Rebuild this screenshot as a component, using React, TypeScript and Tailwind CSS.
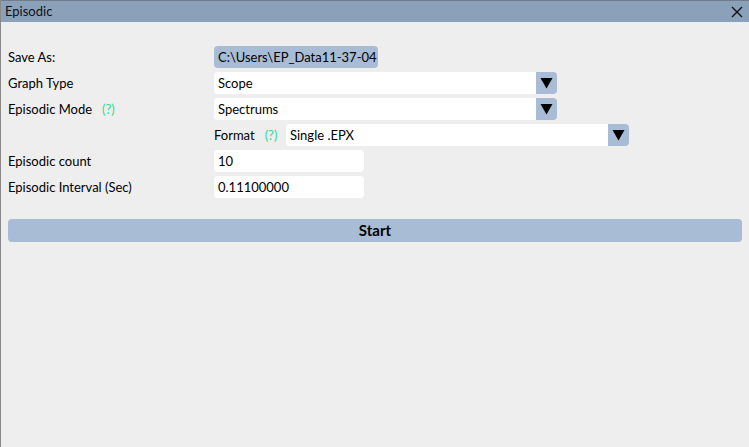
import React from "react";

const Arrow = () => (
  <svg width="13" height="12" viewBox="0 0 13 12">
    <polygon points="0.5,1 12.5,1 6.5,11.5" fill="#000" />
  </svg>
);

const Q = () => <span className="text-[#2fdc92] ml-[10px]">(?)</span>;

export default function App() {
  return (
    <div
      className="w-[749px] h-[447px] bg-[#eeeeee] flex flex-col border-l border-[#8a8a8a] overflow-hidden text-[13px] text-[#000] whitespace-nowrap"
      style={{ fontFamily: "Lato, 'Open Sans', sans-serif" }}
    >
      <div className="h-[22px] bg-[#8ba0b9] border-t border-[#6e7c8c] flex items-center justify-between pl-[4px] pr-[6px]">
        <span className="text-[13px] text-[#111]">Episodic</span>
        <svg width="12" height="12" viewBox="0 0 12 12">
          <path d="M1 1 L11 11 M11 1 L1 11" stroke="#111" strokeWidth="1.4" />
        </svg>
      </div>
      <div className="flex flex-col pl-[7px] pr-[7px] pt-[24px]">
        <div className="flex flex-col gap-[4px]">
          <div className="flex items-center h-[22px]">
            <div className="w-[206px] pt-[1px]">Save As:</div>
            <div className="w-[164px] h-[22px] bg-[#a9bcd5] rounded-[4px] flex items-center px-[4px] pt-[1px]">
              C:\Users\EP_Data11-37-04
            </div>
          </div>
          <div className="flex items-center h-[22px]">
            <div className="w-[206px] pt-[1px]">Graph Type</div>
            <div className="flex h-[22px]">
              <div className="w-[322px] bg-white rounded-l-[4px] flex items-center px-[4px] pt-[1px]">Scope</div>
              <div className="w-[21px] bg-[#a9bcd5] rounded-r-[4px] flex items-center justify-center">
                <Arrow />
              </div>
            </div>
          </div>
          <div className="flex items-center h-[22px]">
            <div className="w-[206px] pt-[1px]">
              Episodic Mode
              <Q />
            </div>
            <div className="flex h-[22px]">
              <div className="w-[322px] bg-white rounded-l-[4px] flex items-center px-[4px] pt-[1px]">Spectrums</div>
              <div className="w-[21px] bg-[#a9bcd5] rounded-r-[4px] flex items-center justify-center">
                <Arrow />
              </div>
            </div>
          </div>
          <div className="flex items-center h-[22px]">
            <div className="w-[206px]"></div>
            <div className="w-[72px] pt-[1px]">
              Format
              <Q />
            </div>
            <div className="flex h-[22px]">
              <div className="w-[322px] bg-white rounded-l-[4px] flex items-center px-[4px] pt-[1px]">Single .EPX</div>
              <div className="w-[21px] bg-[#a9bcd5] rounded-r-[4px] flex items-center justify-center">
                <Arrow />
              </div>
            </div>
          </div>
          <div className="flex items-center h-[22px]">
            <div className="w-[206px] pt-[1px]">Episodic count</div>
            <div className="w-[150px] h-[22px] bg-white rounded-[4px] flex items-center px-[4px] pt-[1px]">10</div>
          </div>
          <div className="flex items-center h-[22px]">
            <div className="w-[206px] pt-[1px]">Episodic Interval (Sec)</div>
            <div className="w-[150px] h-[22px] bg-white rounded-[4px] flex items-center px-[4px] pt-[1px]">0.11100000</div>
          </div>
        </div>
        <div className="mt-[21px] h-[23px] bg-[#a9bcd5] rounded-[4px] flex items-center justify-center font-bold text-[15px]">
          Start
        </div>
      </div>
    </div>
  );
}
